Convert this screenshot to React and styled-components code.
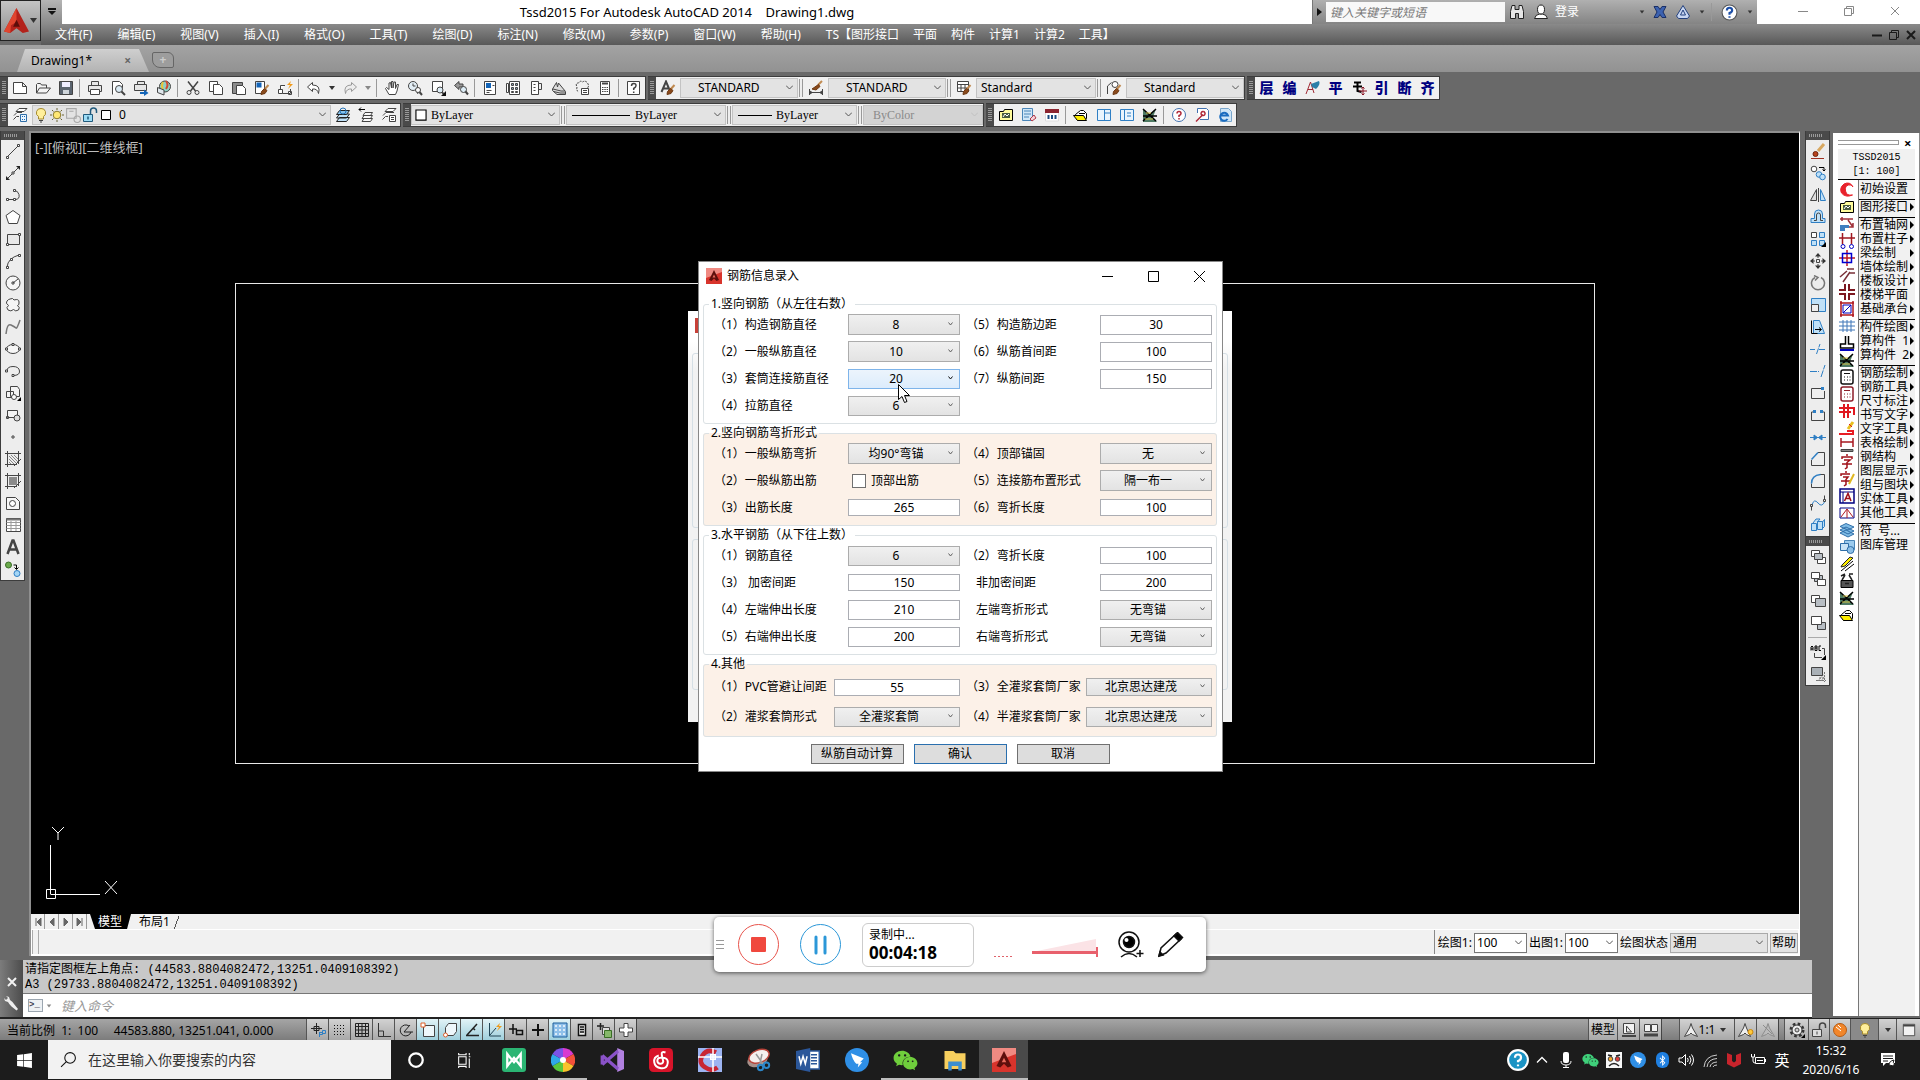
import React from 'react';
import styled, { createGlobalStyle, css } from 'styled-components';
import { FaWindows, FaWeixin, FaBluetoothB } from 'react-icons/fa';

const UI_FONT = '"Noto Sans", "Noto Sans CJK SC", sans-serif';
const MONO_FONT = '"Liberation Mono", "Noto Sans CJK SC", monospace';
const SERIF_FONT = '"Liberation Serif", "Noto Sans CJK SC", serif';

const GlobalStyle = createGlobalStyle`
  * {
    box-sizing: border-box;
  }

  body {
    margin: 0;
    font-family: ${UI_FONT};
    font-size: 12px;
    line-height: 16px;
    color: #000;
    background: #696969;
  }

  button,
  input,
  select {
    font: inherit;
    color: inherit;
    margin: 0;
    padding: 0;
    border: 0;
    border-radius: 0;
    background: none;
    outline: none;
  }

  svg {
    display: block;
    flex: none;
  }
`;

/* ---------- icons ---------- */

const BLUE = '#2f7fc4';
const SKY = '#bfe0f7';
const NAVY = '#000080';

const CadA = (
  <>
    <path d="M8 0 16 15l-4 1-4-3-4 3-4-1z" fill="#b3221b" stroke="none" />
    <path d="M8 0 8 9 4.500 11 4 16 0 15z" fill="#e0452f" stroke="none" />
    <path d="M8 7.500 10.200 12H5.800z" fill="#5c0d0a" stroke="none" />
  </>
);

const brush = (
  <>
    <path d="M14.500 5 10 10" stroke="#c08a50" strokeWidth="2" />
    <path d="M10.500 8.500 7.500 11.500l-.5 3 4-1 2-3z" stroke="#6e3a14" fill="#8a4a1c" />
  </>
);

const ICONS = {
  cadA: CadA,
  new: <path d="M1.500 2.500h9l4 4v7h-13zM10.500 2.500v4h4" fill="#fff" />,
  open: <path d="M1.500 13V4.500l1-1h3l1 1.500h5v3M1.500 13l3-5h11l-4 5z" fill="#f4f4f4" />,
  save: (
    <>
      <path d="M1.500 1.500h13v13h-13z" fill="#5b6570" />
      <path d="M4 2h8v5H4z" fill="#eef" stroke="none" />
      <path d="M5 10h6v4H5z" fill="#cfd5da" stroke="none" />
    </>
  ),
  print: (
    <>
      <path d="M4.500 5V1.500h7V5M1.500 5.500h13v6h-13z" fill="#e6e6e6" />
      <path d="M3.500 9.500h9v5h-9z" fill="#fff" />
    </>
  ),
  preview: (
    <>
      <path d="M2.500 14.500v-13h7l3 3V8" fill="#fff" />
      <circle cx="9" cy="9" r="3.500" fill="#dcecf6" />
      <path d="m11.500 11.500 3.500 3.500" strokeWidth="2" />
    </>
  ),
  publish: (
    <>
      <path d="M4.500 4V1.500h7V4M1.500 4.500h12v6h-12z" fill="#e6e6e6" />
      <path d="M7 12h4V9.500l4.500 3.500-4.500 3V14H7z" fill="#1465b8" stroke="none" />
    </>
  ),
  globe: (
    <>
      <circle cx="9" cy="6.500" r="5.500" fill="#8fd0c4" />
      <path d="M10 1q3 4 0 8" stroke="#d24a31" strokeWidth="2" />
      <path d="M7 2q-2 4 0 7" stroke="#e6c63a" strokeWidth="2" />
      <path d="M1.500 7.500 8 10v5l-6.500-2.500z" fill="#dfe7ec" />
    </>
  ),
  cut: (
    <>
      <path d="M3 1.500 10.500 11M13 1.500 5.500 11" strokeWidth="1.500" />
      <circle cx="4" cy="12.500" r="2" />
      <circle cx="12" cy="12.500" r="2" />
    </>
  ),
  copy: (
    <>
      <path d="M1.500 1.500h8v10h-8z" fill="#fff" />
      <path d="M5.500 4.500h6l3 3v7h-9z" fill="#fff" />
    </>
  ),
  paste: (
    <>
      <path d="M1.500 2.500h10v11h-10z" fill="#8c8c8c" />
      <path d="M5.500 5.500h6l3 3v6h-9z" fill="#fff" />
    </>
  ),
  match: (
    <>
      <path d="M1.500 1.500h9v12h-9z" fill="#fff" />
      <path d="M2.500 2.500h5v5h-5z" fill="#1465b8" stroke="none" />
      {brush}
    </>
  ),
  blockEdit: (
    <>
      <path d="M8 5.500H3.500v4M1.500 9.500h4v4h-4zM5.500 13.500h8M13.500 9v4M11.500 11.500h3v3h-3z" fill="#fff" />
      <path d="m14 1-4 4h3l-2 4 5-5h-3z" fill="#f09a1a" stroke="none" />
    </>
  ),
  undo: <path d="M6.500 2.500 1.500 7l5 4.500V9q5-.5 6 4.500Q15 5 6.500 5z" fill="#fff" />,
  redo: <path d="m9.500 2.500 5 4.500-5 4.500V9q-5-.5-6 4.500Q1 5 9.500 5z" stroke="#9a9a9a" fill="#eee" />,
  down: <path d="M5 6h6l-3 4z" fill="#333" stroke="none" />,
  downDim: <path d="M5 6h6l-3 4z" fill="#888" stroke="none" />,
  pan: <path d="M5 14.500 1.500 8.500l1-1L5 9.500V3l1.500-.5L7.500 8V1.500H9V8l1-6h1.500v6.500l1.500-4h1.500L13 11l-1.500 3.500z" fill="#fff" />,
  zoomRt: (
    <>
      <circle cx="6" cy="6" r="4.500" fill="#e2eef6" />
      <path d="M6 3.500V6h2.500M11 14l-2-4" />
      <circle cx="11" cy="10" r="2.500" fill="#fff" />
      <path d="m12.500 12 2.500 3" strokeWidth="2" />
    </>
  ),
  zoomWin: (
    <>
      <path d="M2.500 1.500h10v10h-10z" fill="#fff" />
      <circle cx="10" cy="10" r="3" fill="#dcecf6" />
      <path d="m12 12 1.500 2" strokeWidth="2" />
      <path d="M16 11v5h-5z" fill="#111" stroke="none" />
    </>
  ),
  zoomPrev: (
    <>
      <path d="M6 1.500 1.500 5.500 6 9.500V7h4V4H6z" fill="#999" />
      <circle cx="10.500" cy="9.500" r="3" fill="#dcecf6" />
      <path d="m12.500 11.500 2.500 3" strokeWidth="2" />
    </>
  ),
  props: (
    <>
      <path d="M2.500 1.500h11v13h-11z" fill="#fff" />
      <path d="M4 3h5v5H4z" fill="#1465b8" stroke="none" />
      <path d="M10.500 5.500h2M4.500 10.500h5M4.500 12.500h3" />
    </>
  ),
  design: (
    <>
      <path d="M1.500 3.500h2v9h-2zM4.500 1.500h10v13h-10z" fill="#fff" />
      <path d="M6.500 3.500h2v2h-2zM10.500 3.500h2v2h-2zM6.500 7.500h2v2h-2zM10.500 7.500h2v2h-2zM6.500 11.500h2v1h-2zM10.500 11.500h2v1h-2z" fill="#8aa0b4" />
    </>
  ),
  palettes: (
    <>
      <path d="M3.500 1.500h7v13h-7z" fill="#fff" />
      <path d="M5.500 4.500h2M5.500 7.500h2M5.500 10.500h2M10.500 3.500h3v6h-3" />
    </>
  ),
  sheets: <path d="m1.500 9 4-6.500 1 4.500 1-4 7 8.500v3H6l-4.500-4zM2 9l8 2h4M2.500 11.500 9 13h5" fill="#ddd" />,
  markup: (
    <>
      <path d="M2.500 6q-1-3 2-3 2-3 4-1 3-2 5 1 2 3 0 5M3 7q-1 4 2 5" strokeDasharray="2 1" />
      <path d="M7.500 8.500h7v6h-7zM9 10.500h4M9 12.500h4" fill="#fff" />
    </>
  ),
  calc: (
    <>
      <path d="M3.500 1.500h9v13h-9z" fill="#fff" />
      <path d="M5 3.500h6" strokeWidth="2" />
      <path d="M5 7.500h6M5 9.500h6M5 11.500h6" strokeDasharray="1.500 .8" />
    </>
  ),
  help: (
    <>
      <path d="M1.500 1.500h12v13h-12z" fill="#fff" />
      <path d="M5.500 6q0-2.500 2.300-2.500T10 5.800Q10 7 7.700 8.500V10M7.700 11.500v1.500" strokeWidth="1.500" />
    </>
  ),
  textStyle: (
    <>
      <path d="M1.500 12 6 1.500 10 11M3 8.500h5" strokeWidth="2" />
      {brush}
    </>
  ),
  dimStyle: (
    <>
      <path d="M1.500 9v6M14.500 9v6M2 12.500h12M1 12.500l2-1.500v3zM15 12.500 13 11v3z" />
      <path d="m14 1-4 4" stroke="#c08a50" strokeWidth="2" />
      <path d="M10.500 4.500 4 9l4 1 4-3.500z" stroke="#6e3a14" fill="#8a4a1c" />
    </>
  ),
  tableStyle: (
    <>
      <path d="M1.500 1.500h11v10h-11zM1.500 4.500h11M1.500 8h11M5 4v7M9 4v7" fill="#fff" />
      {brush}
    </>
  ),
  leaderStyle: (
    <>
      <path d="M1.500 14V6l4-3.500" />
      <circle cx="9" cy="4.500" r="3" fill="#fff" />
      {brush}
    </>
  ),
  layers: (
    <>
      <path d="m4 4.500 3-3h8l-3 3zM2 8.500l3-3h5M1.500 12.500l3-3H7" fill="#fff" />
      <path d="M8.500 7.500h6v7h-6z" fill="#eaf4fc" stroke="#2f6ea8" />
      <path d="M10 9.500h3M10 12.500h3" stroke="#1465b8" strokeDasharray="1 1" />
    </>
  ),
  layerCur: (
    <>
      <path d="m1.500 14.500 3-4h10l-3 4zM1.500 11l3-4h10l-3 4z" fill={SKY} stroke="#222" />
      <path d="m1.500 7.500 3-4h10l-3 4z" fill="#86c1ea" stroke="#222" />
      <circle cx="8" cy="4" r="3" stroke="#2674b8" />
    </>
  ),
  layerPrev: (
    <>
      <path d="m4 14.500 2-3h8.500l-2 3zM4 11.500l2-3h8.500l-2 3zM5 8.500l2-3h7.500l-2 3z" fill="#f8f8f8" />
      <path d="M1 2.500h6M3 .5l-2 2 2 2" stroke="#000" />
    </>
  ),
  layerState: (
    <>
      <path d="m4 4.500 3-3h8l-3 3zM2 8.500l3-3h8M1.500 12.500l3-3H7" fill="#fff" />
      <path d="M8.500 8.500h6v6h-6zM10 10.500h3M10 12.500h3" fill="#fff" />
    </>
  ),
  bulb: (
    <>
      <path d="M8 1.500a4.300 4.300 0 0 0-2.500 8V12h5V9.500A4.300 4.300 0 0 0 8 1.500z" fill="#ffef9a" stroke="#a58a2c" />
      <path d="M6 13.500h4M7 15h2" />
    </>
  ),
  sun: (
    <>
      <circle cx="8" cy="8" r="3.800" fill="#ffe773" stroke="#8b7a2d" />
      <path d="M8 1v2M8 13v2M1 8h2M13 8h2M3 3l1.500 1.500M11.500 11.500 13 13M13 3l-1.500 1.500M4.500 11.500 3 13" stroke="#6b6432" />
    </>
  ),
  freeze: (
    <>
      <path d="M1.500 1.500h9v9h-9zM4 4h4" stroke="#a8a8a8" />
      <circle cx="11.500" cy="11.500" r="3" stroke="#a8a8a8" />
    </>
  ),
  lock: (
    <>
      <path d="M1.500 7.500h9v7h-9z" fill="#9edcf5" stroke="#215a7c" />
      <path d="M8.500 8V4a3 3 0 0 1 6 0v2M6 9.500v3" stroke="#215a7c" strokeWidth="1.500" />
    </>
  ),
  unlock: (
    <>
      <path d="M1.500 7.500h9v7h-9zM6 9.500v3" fill="#ddd" />
      <path d="M8.500 8V4a3 3 0 0 1 6 0v2" strokeWidth="1.500" />
    </>
  ),
  swatch: <path d="M3.500 3.500h9v9h-9z" fill="#fff" stroke="#000" />,
  folderImg: (
    <>
      <path d="M1.500 4.500h4l1-2h8v11h-13z" fill="#fffb9c" stroke="#000" />
      <path d="M4 6h8v5H4z" fill="#4a5b40" stroke="none" />
      <path d="m5 10 2-3 2 2 2-2" stroke="#fff" />
    </>
  ),
  gridPen: (
    <>
      <path d="M1.500 1.500h10v12h-10z" fill="#cfe6f7" stroke="#4a86b8" />
      <path d="M3 4h7M3 7h7M3 10h5" stroke="#4a86b8" />
      <path d="m9 12 4-4 2 3-4 3z" fill="#f6d4da" stroke="#b03a4a" />
    </>
  ),
  tableRed: (
    <>
      <path d="M1.500 5v9h13V5" stroke="#ddd" fill="#fff" />
      <path d="M1 2h14v4H1z" fill="#8c2530" stroke="none" />
      <path d="M4.500 8v4M8 8v4M11.500 8v4" stroke="#1a4b80" strokeWidth="2" />
    </>
  ),
  yellowOpen: (
    <>
      <path d="m2.500 7.500 5-4h3l3 3v5l-2 2h-7z" fill="#fff" stroke="#000" />
      <path d="M.5 8.500h10l3 5h-9z" fill="#ffee00" stroke="#000" />
      <path d="M6 6.500h6" stroke="#000" />
    </>
  ),
  winA: <path d="M1.500 2.500h13v11h-13zM8.500 2.500v11M8.500 6h6" fill="#e8f4fd" stroke={BLUE} />,
  winB: <path d="M1.500 2.500h13v11h-13zM5.500 2.500v11M8 6h4M8 9h4" fill="#e8f4fd" stroke={BLUE} />,
  sketch: (
    <>
      <path d="M1 15V2l6 6 7-6-3 8 4 5z" fill="#4e7a63" stroke="none" />
      <path d="M1 2l13 12M1 14 14 2M1 9h14" stroke="#000" strokeWidth="1.500" />
      <path d="M3 12h8M4 6h5" stroke="#d8c84a" />
    </>
  ),
  helpRed: (
    <>
      <circle cx="8" cy="8" r="6.500" fill="#fff" stroke="#4272b0" />
      <path d="M6 6.500q0-2 2-2t2 2Q10 8 8 8.500V10M8 11v1.500" stroke="#b02a3a" strokeWidth="1.500" />
    </>
  ),
  docPen: (
    <>
      <path d="M3.500 6V1.500h9l2 2v9H6" fill="#fff" stroke="#4272b0" />
      <path d="M2 14.500 9 7.500M9 4.500a2 2 0 1 0 .1 0" stroke="#b02a3a" strokeWidth="1.500" />
    </>
  ),
  ie: (
    <>
      <path d="M3.500 1.500h8l3 3v10h-11z" fill="#cfe6f7" stroke="#7aa6cc" />
      <path d="M10.500 12A4 4 0 1 1 11 8.500H4" stroke="#1a6cc0" strokeWidth="2" />
    </>
  ),
  brushA: (
    <>
      <path d="M1 14 5.500 2 9 13M3 9.500h5" stroke="#a02a34" />
      <path d="M6 4 14 1q2 3-3 8L7 7z" fill="#2b7fa8" stroke="none" />
    </>
  ),
  target: (
    <>
      <path d="M3 2.500h7M2 6.500h9M6.500 2v9l4 1" stroke="#000" strokeWidth="2" />
      <path d="M12 7v8M8 11h8M10.500 8.500 12 7l1.500 1.500M10.500 13.500 12 15l1.500-1.500" stroke="#8a1020" />
    </>
  ),
  /* draw */
  line: <path d="m3 13 10-10M1.500 13.500h2v2h-2zM12.500 1.500h2v2h-2z" fill="#fff" />,
  xline: (
    <>
      <path d="m2 14 12-12" />
      <path d="M1 15v-4l4 4zM15 1v4l-4-4z" fill="#222" stroke="none" />
      <path d="M7 7h2v2H7z" fill="#fff" />
    </>
  ),
  pline: (
    <>
      <path d="M2 12.500h8q5 0 4-5-1-4-5-4" />
      <path d="M1.500 11.500h2v2h-2zM8.500 11.500h2v2h-2zM8.500 2.500h2v2h-2z" fill="#fff" />
    </>
  ),
  polygon: <path d="m8 1.500 7 5-2.700 8H3.700L1 6.500z" fill="#fff" />,
  rect: (
    <>
      <path d="M2.500 3.500h12v10h-12z" fill="#e8e8e8" />
      <path d="M1.500 12.500h2v2h-2zM13.500 2.500h2v2h-2z" fill="#fff" />
    </>
  ),
  arc: (
    <>
      <path d="M2 14Q3 5 14 2" />
      <path d="M1.500 13.500h2v2h-2zM13.500 1.500h2v2h-2zM5.500 5.500h2v2h-2z" fill="#fff" />
    </>
  ),
  circle: (
    <>
      <circle cx="8" cy="8" r="7" fill="#f6f6f6" />
      <path d="m8 8 5-4M7 7h2v2H7z" fill="#fff" />
    </>
  ),
  cloud: <path d="M5 2q3-1.500 4 1 5-1.500 5 2 .5 3-1.500 3.500 3 2 1 4.500-3 2-5-.5Q6 15 3 13q-2.500-2.500.5-4.500Q0 6 2 4q1-1.500 3-2z" fill="#f6f6f6" />,
  spline: <path d="M1 15q1-11 5-9t5 3 4-8" strokeWidth="1.500" stroke="#777" />,
  ellipse: (
    <>
      <ellipse cx="8" cy="8" rx="6.500" ry="4.500" fill="#f6f6f6" />
      <path d="M.5 7h2v2h-2zM13.500 7h2v2h-2zM7 2.500h2v2H7z" fill="#fff" />
    </>
  ),
  ellipseArc: (
    <>
      <path d="M2 8q0-4.500 6-4.500T14.500 8 8 12.500" />
      <path d="M.5 7h2v2h-2zM7 11.500h2v2H7z" fill="#fff" />
    </>
  ),
  insert: (
    <>
      <path d="M5.500 1.500h7l2 3v7h-9zM1.500 6.500h7v6h-7z" fill="#f4f4f4" />
      <circle cx="9" cy="12" r="2.500" fill="#fff" />
      <path d="M16 12v4h-4z" fill="#000" stroke="none" />
    </>
  ),
  block: (
    <>
      <path d="M2.500 3.500h10v7h-10zM1.500 9.500h2v2h-2z" fill="#f4f4f4" />
      <circle cx="12" cy="11" r="3" fill="#ddd" />
    </>
  ),
  point: <path d="M7 7h2v2H7z" fill="#fff" />,
  hatch: (
    <>
      <path d="m4 8 5 5M4 5l8 8M6 4l7 7M9 4l4 4M4 11l2 2" stroke="#888" />
      <path d="M2.500 0v16M13.500 0v13M0 2.500h16M0 13.500h12M9 15l7-7" />
    </>
  ),
  gradient: (
    <>
      <path d="M4 4h8v8H4z" fill="#8a8a8a" stroke="none" />
      <path d="M2.500 0v16M13.500 0v13M0 2.500h16M0 13.500h12M9 15l7-7" />
    </>
  ),
  region: (
    <>
      <path d="M1.500 2.500h9l4 4v8h-13z" fill="#f6f6f6" />
      <circle cx="7.500" cy="8.500" r="3" fill="#fff" />
    </>
  ),
  table: (
    <>
      <path d="M1.500 1.500h14v13h-14z" fill="#fff" />
      <path d="M1.500 5.500h14M1.500 8.500h14M1.500 11.500h14M6 4v10M11 4v10" stroke="#999" />
      <path d="M1.500 2.500h14" stroke="#777" strokeWidth="2" />
    </>
  ),
  mtext: <path d="M2.500 15 7.500 1.500h1l5 13.500M4.500 10.500h7" strokeWidth="2.500" />,
  addSel: (
    <>
      <circle cx="3.500" cy="4" r="3" fill="#6bab4c" stroke="#3a6e26" />
      <circle cx="12" cy="12.500" r="3" fill="#a4d5f5" stroke={BLUE} />
      <path d="M8.500 4h3v4M9.500 6.500l2 2 2-2" stroke="#000" />
    </>
  ),
  /* modify */
  erase: (
    <>
      <path d="M14 1 8 8" stroke="#d8a860" strokeWidth="3" />
      <circle cx="5.500" cy="11" r="2.500" fill="#b8431c" stroke="#6e2710" />
      <path d="M1 15.500h13" stroke="#a03020" />
    </>
  ),
  copyObj: (
    <>
      <circle cx="4" cy="4" r="2.800" fill="#fff" />
      <circle cx="9" cy="9.500" r="2.800" fill={SKY} stroke={BLUE} />
      <circle cx="12.500" cy="12" r="2.800" fill={SKY} stroke={BLUE} />
      <path d="M9 2.500h5v3M12.500 4.500l1.500 1.500 1.500-1.500" stroke="#000" />
    </>
  ),
  mirror: (
    <>
      <path d="M6.500 2.500v11h-6zM8.500 1v14" fill="#ddd" />
      <path d="M10.500 2.500v11h5z" fill={SKY} stroke={BLUE} />
    </>
  ),
  offset: (
    <>
      <path d="M1 13.500V9.500h3.500V5a4 4 0 0 1 8 0v4.500H15v4z" fill={SKY} stroke={BLUE} />
      <path d="M4 11.500h2.500V6a2 2 0 0 1 4 0v5.500H13" />
    </>
  ),
  array: (
    <>
      <path d="M1.500 1.500h5v5h-5z" fill="#fff" />
      <path d="M9.500 1.500h5v5h-5zM1.500 9.500h5v5h-5zM9.500 9.500h5v5h-5z" fill={SKY} stroke={BLUE} />
      <path d="M16 11v5h-5z" fill="#000" stroke="none" />
    </>
  ),
  move: (
    <>
      <path d="M8 0l3 3.500H5zM8 16l3-3.500H5zM0 8l3.500-3v6zM16 8l-3.500-3v6z" fill="#333" stroke="none" />
      <path d="M8 3v2M8 11v2M3 8h2M11 8h2M6.500 6.500h3v3h-3z" />
    </>
  ),
  rotate: <path d="M5 2.500a6.500 6.500 0 1 0 6 0M4 .5l4 2-3 3" strokeWidth="1.500" stroke="#777" />,
  scale: (
    <>
      <path d="M1.500 1.500h14v13h-14z" fill={SKY} stroke={BLUE} />
      <path d="M1.500 7.500h7v7h-7z" fill="#eee" />
    </>
  ),
  stretch: (
    <>
      <path d="M3.500 1.500h6l5 13h-11z" fill={SKY} stroke={BLUE} />
      <path d="M1.500 1.500v13h6M5 10.500h6M9 8.500l2.500 2L9 12.500" stroke="#000" />
    </>
  ),
  trim: <path d="M0 8.500h5M9 8.500h7M6.500 13 10 3" stroke={BLUE} strokeDasharray="6 1" />,
  extend: <path d="M0 8.500h9M11 14l4-12" stroke={BLUE} strokeDasharray="7 1" />,
  breakAt: (
    <>
      <path d="M12 3.500H1.500v10h13V6" fill="#eee" />
      <path d="M11 2h3v3h-3z" fill={BLUE} stroke="none" />
    </>
  ),
  breakObj: (
    <>
      <path d="M3 5H1.500v8.500h13V5H13" fill="#eee" />
      <path d="M3 3h3v3H3zM10 3h3v3h-3z" fill={BLUE} stroke="none" />
    </>
  ),
  join: <path d="M0 8.500h16M4 6l3.500 2.500L4 11zM12 6 8.500 8.500 12 11z" stroke={BLUE} fill={BLUE} />,
  chamfer: (
    <>
      <path d="M8 1.500h6.500v13h-13V9" fill="#eee" />
      <path d="M1.500 8.500 8 1.500" stroke={BLUE} strokeWidth="1.500" />
    </>
  ),
  fillet: (
    <>
      <path d="M10 1.500h4.500v13h-13v-4" fill="#eee" />
      <path d="M1.500 10.500q0-8 9-9" stroke={BLUE} strokeWidth="1.500" />
    </>
  ),
  blend: (
    <>
      <path d="M2 10q2-7 6-2t7-2" stroke={BLUE} />
      <path d="M.5 9.500h2v2h-2zM13.500 4.500h2v2h-2zM1.500 15.500v-4M14.500 4.500v-4" />
    </>
  ),
  explode: <path d="M1.500 6.500h5v7h-5zM7.500 4.500h5v8h-5zM3 6l3-4h4L7.500 5M12.500 5l2-2.500v7l-2 2" fill={SKY} stroke={BLUE} />,
  order1: (
    <>
      <path d="M1.500 1.500h8v6h-8zM7.500 8.500h8v6h-8z" fill="#fff" />
      <path d="M4.500 4.500h8v6h-8z" fill="#b8bec4" />
    </>
  ),
  order2: (
    <>
      <path d="M4.500 4.500h8v6h-8z" fill="#b8bec4" />
      <path d="M1.500 1.500h8v6h-8zM7.500 8.500h8v6h-8z" fill="#fff" />
    </>
  ),
  order3: (
    <>
      <path d="M1.500 2.500h8v7h-8z" fill="#fff" />
      <path d="M5.500 5.500h10v8h-10z" fill="#b8bec4" />
    </>
  ),
  order4: (
    <>
      <path d="M7.500 7.500h8v7h-8z" fill="#b8bec4" />
      <path d="M1.500 1.500h10v8h-10z" fill="#fff" />
    </>
  ),
  annoFront: (
    <>
      <path d="M4.500 9v4.500H12M12 4.500h2.500V11" />
      <path d="M1 6.500V3l1-1 1 1v3.500M1 5h2M5 2v4.500h2V2zM5 4h2M11 2H9v4.500h2" stroke="#000" />
      <path d="M16 11v5h-5z" fill="#000" stroke="none" />
    </>
  ),
  hatchBack: (
    <>
      <path d="M6 14.500h10M14.500 6v10M9 12l6 0M8 15l6-7M11 15l4-5" stroke="#777" strokeDasharray="2 1" />
      <path d="M1.500 1.500h11v8h-11z" fill="#a9b0b6" />
    </>
  ),
  /* TSSD panel */
  swirl: <path d="M14 5Q11-1 5 2 0 6 2.500 11q4 5 11 2-6 1-7-4-1-5 3-6 3-1 4.500 2z" fill="#e8222c" stroke="#e8222c" />,
  axis: (
    <>
      <path d="M1 3h13M3 1v4M9 4l5 7M14 7v4h-4" stroke="#a03038" strokeWidth="1.500" />
      <path d="M1 9h9v3H6v3H1z" fill="#3f7fc0" stroke="none" />
    </>
  ),
  axisNet: (
    <>
      <path d="M0 5h16M3.500 0v11M12.500 0v11" stroke="#a01820" strokeWidth="1.500" />
      <path d="M6 13.500a2 2 0 1 0-4 0 2 2 0 1 0 4 0zM14.500 13.500a2 2 0 1 0-4 0 2 2 0 1 0 4 0z" stroke="#0000c0" />
    </>
  ),
  column: (
    <>
      <path d="M0 8h16M8 0v16" stroke="#c01820" strokeWidth="1.500" />
      <path d="M3.500 3.500h9v9h-9z" stroke="#0000d0" strokeWidth="1.500" />
    </>
  ),
  beam: <path d="m1 10 7-6M4 15l7-10M8 2l7 0M10 6h6" stroke="#7a3038" strokeWidth="1.500" />,
  wall: <path d="M6 0v6H0M10 0v6h6M6 16v-6H0M10 16v-6h6" stroke="#7c1820" strokeWidth="2" />,
  slab: (
    <>
      <path d="M1 2h14M1 14h14M2 0v16M14 0v16" stroke="#b01820" strokeWidth="1.500" />
      <path d="M4 4h8v8H4zM4 12l8-8" stroke="#0000c0" />
    </>
  ),
  stair: <path d="M0 4h16M0 8h16M0 12h16M4 2v12M8 2v12M12 2v12" stroke="#3f77b8" />,
  base: (
    <>
      <path d="M6.500 1v8h-5v4h13V9h-5V1" stroke="#000" strokeWidth="1.500" />
      <path d="M1 15h14" stroke="#0000c0" strokeWidth="2" />
    </>
  ),
  calcBlack: (
    <>
      <rect x="2" y="1" width="12" height="14" rx="2" fill="#fff" stroke="#111" strokeWidth="1.500" />
      <path d="M5 4.500h6M5 8h1M8 8h1M10.500 8h1M5 11h1M8 11h1M10.500 11h1" stroke="#111" />
    </>
  ),
  calcRed: (
    <>
      <rect x="2" y="1" width="12" height="14" rx="2" fill="#fff" stroke="#8c1d28" strokeWidth="1.500" />
      <path d="M5 4.500h6M5 8h1M8 8h1M10.500 8h1M5 11h1M8 11h1M10.500 11h1" stroke="#8c1d28" />
    </>
  ),
  rebar: <path d="M0 5h15v7M0 9h12M5 1v14M9 1v14" stroke="#e01820" strokeWidth="2" />,
  rebarPen: (
    <>
      <path d="M0 14h14v-3H8" stroke="#e81c24" strokeWidth="2" />
      <path d="m9 9 5-7" stroke="#e8c020" strokeWidth="3" />
      <path d="m10 4 3 3" stroke="#e01820" />
    </>
  ),
  dim: (
    <>
      <path d="M2 1v9M14 1v9M2 5h12" stroke="#a81820" strokeWidth="1.500" />
      <path d="M2 12.500h12v2H2z" fill="#888" />
    </>
  ),
  word: <path d="M8 0v2M3 5V3h10v2M5 6h6L8 8.500v5L6 15M3 10h10" stroke="#a01018" strokeWidth="1.500" />,
  wordPen: (
    <>
      <path d="M7 0v2M2 5V3h9M4 6h5L7 8.500v5L5 15M2 10h9" stroke="#a01018" strokeWidth="1.500" />
      <path d="m10 13 5-10" stroke="#e0b820" strokeWidth="2" />
    </>
  ),
  tableA: (
    <>
      <path d="M1 1h14v14H1z" fill="#fff" stroke={NAVY} strokeWidth="1.500" />
      <path d="M1 4h14M4 4v11" stroke={NAVY} />
      <path d="M5.500 13 9 5.500l3 7.500M7 10.500h4" stroke="#a01018" strokeWidth="1.500" />
    </>
  ),
  steel: (
    <>
      <path d="M1 3h14v10H1z" stroke={NAVY} fill="#fff" />
      <path d="m2 12 6-8 6 8M8 4v9" stroke="#b01820" />
    </>
  ),
  stack: <path d="m1 11 6-3 8 4-6 3zM1 8l6-3 8 4-6 3zM1 4.500 7 1.500l8 3.500-6 3z" fill="#7fbce6" stroke="#2f6ea8" />,
  group: (
    <>
      <path d="M5.500 1.500h10v9h-10z" fill="#9ccbee" stroke="#4a86b8" />
      <path d="M1.500 4.500h8v7h-8z" fill="#c9e3f6" stroke="#2f6ea8" />
      <circle cx="11.500" cy="11" r="3.500" fill="#8cbfe6" stroke="#2f6ea8" />
    </>
  ),
  pencil2: (
    <>
      <path d="M3 9 11 1l3 1-8 8-4 1z" fill="#ffee00" stroke="#222" />
      <path d="m2 15 12-10M6 15 15 8" stroke="#000" />
    </>
  ),
  toolbox: (
    <>
      <path d="M2 7.500h12v7H2z" fill="#555" stroke="#000" />
      <path d="M3 7 6 2M13 7l-3-5M2 3l4-2M10 1h4M6 10.500h4" stroke="#222" strokeWidth="1.500" />
    </>
  ),
  /* status */
  infer: (
    <>
      <path d="M6.500 1v11M1 6.500h11M4 4.500h5v4H4z" stroke="#222" />
      <path d="M9.500 10v5M9.500 10.500h3v2h-3M12.500 8.500h3v3h-3z" stroke={BLUE} />
    </>
  ),
  snapDots: <path d="M2 3.500h12M2 6.500h12M2 9.500h12M2 12.500h12" strokeDasharray="1 2" stroke="#111" />,
  grid: <path d="M1.500 1.500h13v13h-13zM4.500 1v14M8 1v14M11.500 1v14M1 4.500h14M1 8h14M1 11.500h14" stroke="#222" />,
  ortho: <path d="M2.500 1v13.500H15M2.500 9h5v5" stroke="#333" />,
  polar: <path d="M11 4a5.500 5.500 0 1 0 2 6M6 10h9M6 10l6-7" stroke="#222" />,
  osnap: (
    <>
      <path d="M3.500 3.500h11v11h-11z" fill="#eef7fb" />
      <path d="M1 1h4v4H1z" stroke="#e0602a" fill="#fff" />
    </>
  ),
  osnap3: (
    <>
      <path d="m3.500 5.500 3-4h8v8l-3 4h-8z" fill="#eef7fb" />
      <circle cx="3.500" cy="13" r="2" stroke="#e0602a" fill="#fff" />
    </>
  ),
  otrack: <path d="M2 13.500h13M3 13 13 2M9 6l2 2" stroke="#222" strokeWidth="1.500" />,
  ducs: (
    <>
      <path d="M3.500 1v13H15M4 13l6-7" stroke="#245" />
      <path d="m14 1-4 4h3l-2 4 5-5h-3z" fill="#f09a1a" stroke="none" />
    </>
  ),
  dyn: <path d="M5 2v10M1 7h8M8.500 8.500h6v4h-6z" stroke="#111" strokeWidth="1.500" />,
  lwt: <path d="M8 2v12M2 8h12" stroke="#111" strokeWidth="2" />,
  tpy: (
    <>
      <path d="M1 1h14v14H1z" fill="#8fc0ea" stroke="#1c5e9c" />
      <path d="M3 4h10M3 8h10M3 12h10" stroke="#dcebf8" strokeDasharray="2 2" strokeWidth="2" />
    </>
  ),
  qp: <path d="M4.500 2.500h7v11h-7zM6 5h4M6 7.500h4M6 10h4" stroke="#111" strokeWidth="1.500" fill="#eee" />,
  sc: (
    <>
      <path d="M1 4h7M4.500 1v7" stroke="#222" strokeWidth="1.500" />
      <path d="M6.500 5.500h7v7h-7z" fill="#ddd" />
      <path d="M8.500 8.500h7v7h-7z" fill="#86b86a" stroke="#3a6e26" />
    </>
  ),
  am: <path d="M6 1.500h4V6h4.500v4H10v4.500H6V10H1.500V6H6z" fill="#fff" />,
  paper: (
    <>
      <path d="M2.500 1.500h11v10h-11zM5.500 10V4l5 6z" fill="#f2f2f2" />
      <path d="M1 14h14" strokeWidth="2" />
    </>
  ),
  views: (
    <>
      <path d="M1.500 2.500h6v7h-6zM8.500 2.500h6v7h-6z" fill="#f2f2f2" />
      <path d="M1 13h14" strokeWidth="3" />
    </>
  ),
  anno: <path d="M8 1.500 9.500 6l5 8.500-5-2L8 11l-1.500 1.500-5 2 5-8.500z" fill="#eee" />,
  annoSun: (
    <>
      <path d="M7 1.500 8.500 6l4 8.500-4-2L7 11l-1.500 1.500-5 2 5-8.500z" fill="#eee" />
      <circle cx="12.500" cy="10" r="2.500" fill="#ffc93c" stroke="#c8860d" />
    </>
  ),
  annoDim: <path d="M8 1.500 9.500 6l5 8.500-5-2L8 11l-1.500 1.500-5 2 5-8.500zM3 3l9 9" stroke="#8d8d8d" fill="#bbb" />,
  gear: (
    <>
      <circle cx="8" cy="8" r="6" stroke="#333" strokeWidth="3" strokeDasharray="2.500 2.200" />
      <circle cx="8" cy="8" r="5" fill="#eee" stroke="#333" />
      <circle cx="8" cy="8" r="2" fill="#ccc" />
      <path d="M16 12v4h-4z" fill="#000" stroke="none" />
    </>
  ),
  orange: (
    <>
      <circle cx="8" cy="8" r="6.500" fill="#f2862a" stroke="#b65c14" />
      <path d="m4 5 5 4M6 3l3 3" stroke="#fff" />
    </>
  ),
  winFrame: (
    <>
      <path d="M1.500 1.500h13v13h-13z" fill="#f2f2f2" />
      <path d="M1.500 3h13" strokeWidth="2" />
    </>
  ),
  /* info center */
  binoc: <path d="M1.500 14.500v-7l1.500-6h3v4h4v-4h3l1.500 6v7h-5v-5h-3v5z" fill="#e6e6e6" stroke="#222" />,
  person: (
    <>
      <path d="M1.500 14.500q1-4 5-4.500h3q4 .5 5 4.500z" fill="#fff" stroke="#222" />
      <ellipse cx="8" cy="5.500" rx="3.500" ry="4.500" fill="#fff" stroke="#222" />
    </>
  ),
  exch: <path d="M2 2.500h4l2 3 2-3h4l-3 5.500 3 5.500h-4l-2-3-2 3H2L5 8z" fill="#3c62b0" stroke="#1a2f66" />,
  a360: <path d="M8 1.500 14.500 12l-2 2.500h-9L1.500 12zM8 6l2.500 5h-5z" fill="#c9d7f2" stroke="#22407e" />,
  helpBall: (
    <>
      <circle cx="8" cy="8" r="7" fill="#fff" stroke="#555" />
      <path d="M5.500 6q0-2.500 2.500-2.500T10.500 6Q10.500 7.500 8 8.500V10M8 11.500V13" stroke="#1d4fa8" strokeWidth="2" />
    </>
  ),
  /* taskbar */
  cortana: <circle cx="8" cy="8" r="4.500" stroke="#fff" strokeWidth="1.500" />,
  taskview: <path d="M2.500 4.500h7v7h-7zM2.500 1v1.500h7V1M2.500 15v-1.500h7V15M12.500 1v2M12.500 6v9M12 4.500h1.500" stroke="#fff" />,
  greenM: (
    <>
      <rect x="0" y="0" width="16" height="16" rx="2" fill="#2bb573" stroke="none" />
      <path d="M3.500 12V4l4.500 5.500L12.500 4v8L8 6.500z" stroke="#fff" strokeWidth="1.500" />
    </>
  ),
  wheel: (
    <>
      <path d="M8 8V0a8 8 0 0 1 7 4z" fill="#d93ad0" stroke="none" />
      <path d="M8 8l7-4a8 8 0 0 1 0 8z" fill="#f2503a" stroke="none" />
      <path d="M8 8l7 4a8 8 0 0 1-7 4z" fill="#f9c22b" stroke="none" />
      <path d="M8 8v8a8 8 0 0 1-7-4z" fill="#5ac83c" stroke="none" />
      <path d="M8 8 1 12a8 8 0 0 1 0-8z" fill="#2fa8e8" stroke="none" />
      <path d="M8 8 1 4a8 8 0 0 1 7-4z" fill="#7a52e8" stroke="none" />
      <circle cx="8" cy="8" r="2" fill="#fff" stroke="none" />
    </>
  ),
  vs: (
    <>
      <path d="M11.500 0 16 2v12l-4.500 2z" fill="#b180e0" stroke="none" />
      <path d="M1.500 5 12 14M1.500 11 12 2M1.500 5v6" stroke="#8a52c8" strokeWidth="2.200" />
    </>
  ),
  netease: (
    <>
      <rect x="0" y="0" width="16" height="16" rx="3" fill="#d8142a" stroke="none" />
      <path d="M11 3q-3-1-2.500 1.500L9.500 9a2 2 0 1 1-2-2.500Q13 6 12.500 10T8 13.500 3.500 9.500 6.500 5" stroke="#fff" strokeWidth="1.300" />
    </>
  ),
  tssdApp: (
    <>
      <path d="M0 0h16v16H0z" fill="#9db4f2" stroke="none" />
      <path d="M12 3Q6 0 3 5t2 8q4 3 8 0" stroke="#c82634" strokeWidth="3" />
      <path d="M0 6h16M10 0v16" stroke="#fff" />
      <path d="M8.500 4.500h3v3h-3z" stroke="#fff" />
    </>
  ),
  snip: (
    <>
      <ellipse cx="7" cy="8" rx="7" ry="4.500" fill="#a8908a" stroke="none" transform="rotate(-20 7 8)" />
      <ellipse cx="8" cy="5.500" rx="7" ry="4.200" fill="#f5f0ee" stroke="#b8443a" transform="rotate(-20 8 5.500)" />
      <path d="m6 4 5 7M10 4 8.500 11" stroke="#999" />
      <circle cx="9" cy="13" r="1.800" stroke="#2c86c8" strokeWidth="1.300" />
      <circle cx="13" cy="11.500" r="1.800" stroke="#2c86c8" strokeWidth="1.300" />
    </>
  ),
  wordApp: (
    <>
      <path d="M8 2h7.500v12H8z" fill="#fff" stroke="#2b579a" />
      <path d="M10 4.500h4M10 6.500h4M10 8.500h4M10 10.500h4" stroke="#2b579a" />
      <path d="M0 2 9.500 0v16L0 14z" fill="#2b579a" stroke="none" />
      <path d="m2 5.500 1.200 5 1.500-5 1.500 5 1.200-5" stroke="#fff" />
    </>
  ),
  ding: (
    <>
      <circle cx="8" cy="8" r="8" fill="#2f8fe6" stroke="none" />
      <path d="M4 3.500 12.500 7 10 9.500h1.500L8.500 13 9 10.500H7.500Q5 8 4 3.500z" fill="#fff" stroke="none" />
    </>
  ),
  folder: (
    <>
      <path d="M1 2h6l1.500 1.500H15V14H1z" fill="#f7cf5e" stroke="none" />
      <path d="M3.500 9h9v6h-2.300v-3H5.800v3H3.500z" fill="#3c8ed0" stroke="none" />
    </>
  ),
  cadApp: (
    <>
      <path d="M0 0h16v16H0z" fill="#f08a82" stroke="none" />
      <path d="M0 10 16 4v12H0z" fill="#d8342c" stroke="none" />
      <path d="m8 2 5 10-2.500 1L8 10.500 5.500 13 3 12z" fill="#5e0f0c" stroke="none" />
      <path d="m8 6.500 1.500 3h-3z" fill="#e86a5c" stroke="none" />
    </>
  ),
  tip: (
    <>
      <circle cx="8" cy="8" r="7.200" fill="#1b93c4" stroke="#fff" strokeWidth="1.500" />
      <path d="M5.800 6.300q0-2.300 2.200-2.300t2.200 2T8 8.700v1M8 11.200v1.400" stroke="#fff" strokeWidth="1.600" />
    </>
  ),
  up: <path d="m3 10.500 5-5 5 5" stroke="#fff" strokeWidth="1.300" />,
  mic: (
    <>
      <rect x="5" y="0" width="6" height="11" rx="2" fill="#fff" stroke="none" />
      <path d="M3 9q0 4 5 4t5-4M8 13v3M5 15.500h6" stroke="#fff" />
    </>
  ),
  face: (
    <>
      <path d="M0 0h16v16H0z" fill="#f7f7f7" stroke="none" />
      <circle cx="4.500" cy="7" r="2.300" fill="#f6a828" stroke="#444" />
      <circle cx="11.500" cy="7" r="2.300" fill="#e23c3c" stroke="#444" />
      <path d="m2 3 4 1M14 3l-4 1M3 14q5-5 10 0" stroke="#222" strokeWidth="1.500" />
    </>
  ),
  speaker: <path d="M1 6h3l3.500-3.500v11L4 10H1zM9.500 6q1.500 2 0 4M11.500 4q3 4 0 8M13.500 2.500q4 5.500 0 11" stroke="#fff" />,
  wifi: <path d="M2 15Q3 4 15 3M5 15q1-8 10-8.500M8 15q.5-4.500 7-5M11 15q.5-2 4-2" stroke="#ccc" />,
  shield: <path d="m1 1 5 2v6l2 1.500L10 9V3l5-2v11l-7 3.500L1 12z" fill="#c8242c" stroke="none" />,
  battery: <path d="M5.500 5.500h9v6h-9zM15.500 7v3M1.500 2v3h3V2M3 5v4q0 2 2 2M7 8.500h6" stroke="#fff" />,
  notify: (
    <>
      <path d="M1 1h14v10H6l-3 3v-3H1z" fill="#fff" stroke="none" />
      <path d="M3 4h10M3 6.500h10M3 9h5" stroke="#1c1c1c" />
      <path d="M9 13q0-4 5-5-2 3 1 4-2 3-6 1z" fill="#fff" stroke="#1c1c1c" />
    </>
  ),
  wrench: <path d="M2 1 5 2l1 3q3 2 4 4l4 5-1.500 1.500-5-4Q5 9 4 7L1 6 0 3l2 2 2-2z" fill="#eee" stroke="none" />,
  closeX: <path d="m4 4 8 8M12 4l-8 8" stroke="#f2f2f2" strokeWidth="2" />,
  search: (
    <>
      <circle cx="9.500" cy="6.500" r="5" stroke="#111" />
      <path d="m6 10-5 5" stroke="#111" />
    </>
  ),
};

const Icon = ({ name, size = 16, className }) => (
  <svg className={className} width={size} height={size} viewBox="0 0 16 16" fill="none" stroke="#444" strokeWidth="1" aria-hidden="true">
    {ICONS[name]}
  </svg>
);

/* ---------- page ---------- */

const Shell = styled.div`
  position: relative;
  display: flex;
  flex-direction: column;
  min-height: 100vh;
  background: #696969;
  overflow: hidden;
`;

const Header = styled.header`
  display: flex;
  height: 45px;
  background: #6b6b6b;
`;

const AppButton = styled.button`
  display: flex;
  align-items: center;
  justify-content: center;
  gap: 1px;
  width: 41px;
  height: 41px;
  border: 1px solid #222;
  background: linear-gradient(#c4c4c4, #8b8b8b);
`;

const HeaderRows = styled.div`
  flex: 1;
  display: flex;
  flex-direction: column;
`;

const TitleRow = styled.div`
  display: flex;
  height: 24px;
  background: #fff;
`;

const QuickButton = styled.button`
  width: 21px;
  background: linear-gradient(#b5b5b5, #8a8a8a);
  display: flex;
  align-items: center;
  justify-content: center;
`;

const Title = styled.h1`
  flex: 1;
  margin: 0;
  text-align: center;
  font-size: 13px;
  font-weight: 400;
  line-height: 24px;
  white-space: pre;
`;

const InfoCenter = styled.div`
  display: flex;
  align-items: center;
  width: 445px;
  background: linear-gradient(#b0b0b0, #848484);
  border-left: 1px solid #777;
`;

const InfoButton = styled.button`
  display: flex;
  align-items: center;
  justify-content: center;
  gap: 6px;
  width: ${({ $w }) => $w || 24}px;
  height: 22px;
  color: #fff;
`;

const InfoSearch = styled.input`
  width: 179px;
  height: 20px;
  padding: 0 4px;
  background: #f8f8f8;
  font-style: italic;

  &::placeholder {
    color: #777;
    opacity: 1;
  }
`;

const Spacer = styled.div`
  flex: 1;
`;

const WindowButtons = styled.div`
  display: flex;
  width: 163px;
  padding-right: 2px;
  justify-content: flex-end;
`;

const WindowButton = styled.button`
  display: flex;
  align-items: center;
  justify-content: center;
  width: ${({ $w }) => $w || 46}px;
  height: 22px;
`;

const MenuRow = styled.nav`
  display: flex;
  align-items: center;
  justify-content: space-between;
  height: 21px;
  padding: 0 1px 0 14px;
  background: linear-gradient(#8a8a8a, #585858);
`;

const MenuGroup = styled.div`
  display: flex;
  gap: ${({ $gap }) => $gap}px;
`;

const MenuItem = styled.a`
  color: #fff;
  text-decoration: none;
  white-space: nowrap;
`;

const FileTabs = styled.div`
  display: flex;
  align-items: flex-end;
  height: 27px;
  padding-left: 17px;
  background: linear-gradient(#a3a3a3, #929292);
`;

const FileTab = styled.div`
  display: flex;
  align-items: center;
  justify-content: space-between;
  width: 132px;
  height: 23px;
  padding: 0 18px 0 14px;
  background: linear-gradient(#cfcfcf, #b3b3b3);
  clip-path: polygon(8px 0, 122px 0, 132px 100%, 0 100%);
`;

const TabClose = styled.button`
  color: #666;
  font-weight: 700;
`;

const NewTab = styled.button`
  width: 22px;
  height: 16px;
  margin: 0 0 4px 3px;
  border: 1px solid #666;
  border-radius: 2px 6px 2px 8px;
  background: #9d9d9d;
  color: #ccc;
  line-height: 14px;
  font-weight: 700;
`;

const Toolbars = styled.div`
  display: flex;
  flex-direction: column;
  gap: 3px;
  padding: 4px 0;
  background: #696969;
`;

const ToolRow = styled.div`
  display: flex;
  gap: 2px;
`;

const Segment = styled.div`
  display: flex;
  align-items: center;
  height: 24px;
  border: 1px solid #3c3c3c;
  border-left: 0;
  background: #f0f0f0;
`;

const Grip = styled.div`
  width: 8px;
  align-self: stretch;
  border: 3px solid #4a4a4a;
  border-width: 4px 2px;
  background: repeating-linear-gradient(#9a9a9a 0 1px, #4a4a4a 1px 2px);
`;

const ToolButton = styled.button`
  display: flex;
  align-items: center;
  justify-content: center;
  flex: none;
  width: ${({ $w }) => $w || 23}px;
  height: ${({ $h }) => $h || 22}px;
`;

const GlyphButton = styled(ToolButton)`
  color: ${NAVY};
  font-size: 14px;
  font-weight: 900;
`;

const Sep = styled.div`
  width: 6px;
  height: 18px;
  background: linear-gradient(90deg, transparent 2px, #999 2px 3px, transparent 3px);
`;

const DoubleSep = styled(Sep)`
  background: linear-gradient(90deg, transparent 1px, #999 1px 2px, #eee 2px 4px, #999 4px 5px, transparent 5px);
`;

const ComboBox = styled.div`
  position: relative;
  display: flex;
  align-items: center;
  flex: none;
  width: ${({ $w }) => $w}px;
  height: 20px;
  border: 1px solid ${({ $edge }) => $edge || '#c3c3c3'};
  background: ${({ $bg }) => $bg || '#e3e3e3'};
`;

const ComboSelect = styled.select`
  flex: 1;
  min-width: 0;
  height: 100%;
  padding-left: ${({ $pad }) => $pad || 0}px;
  appearance: none;
  font-family: ${({ $serif }) => ($serif ? SERIF_FONT : 'inherit')};
  opacity: 1;
  color: ${({ disabled }) => (disabled ? '#8a8a8a' : '#000')};
`;

const Chevron = styled.svg`
  position: absolute;
  right: ${({ $right }) => $right || 4}px;
  top: calc(50% - 3px);
  pointer-events: none;
`;

const Combo = ({ label, value, w, pad, serif, disabled, bg, edge, children }) => (
  <ComboBox $w={w} $bg={bg} $edge={edge}>
    {children}
    <ComboSelect aria-label={label} defaultValue={value} $pad={pad} $serif={serif} disabled={disabled}>
      <option>{value}</option>
    </ComboSelect>
    <Chevron width="7" height="5" viewBox="0 0 7 5" fill="none" stroke={disabled ? '#c0c0c0' : '#555'}>
      <path d="M0 .5 3.500 4 7 .5" />
    </Chevron>
  </ComboBox>
);

const LineSample = styled.div`
  width: ${({ $w }) => $w}px;
  height: 1px;
  margin-left: 5px;
  background: #000;
`;

const Body = styled.div`
  flex: 1;
  display: flex;
`;

const MainColumn = styled.main`
  flex: 1;
  display: flex;
  flex-direction: column;
`;

const WorkRow = styled.div`
  flex: 1;
  display: flex;
  margin-bottom: 4px;
`;

const Rail = styled.div`
  width: ${({ $w }) => $w}px;
  padding-left: ${({ $pad }) => $pad || 0}px;
`;

const RailBar = styled.div`
  display: flex;
  flex-direction: column;
  align-items: center;
  width: 25px;
  border: 1px solid #3c3c3c;
  border-top: 0;
  background: #ededed;
`;

const RailGrip = styled.div`
  align-self: stretch;
  height: 9px;
  border: 3px solid #4a4a4a;
  border-right-width: 7px;
  background: repeating-linear-gradient(90deg, #9a9a9a 0 1px, #4a4a4a 1px 2px);
`;

const RailSep = styled.div`
  width: 19px;
  height: 1px;
  margin: 3px 0;
  background: #aaa;
`;

const CanvasColumn = styled.div`
  flex: 1;
  display: flex;
  flex-direction: column;
  border: 2px solid #8f8f8f;
  border-right: 1px solid #fff;
  border-bottom: 0;
`;

const Canvas = styled.section`
  position: relative;
  flex: 1;
  min-height: 680px;
  overflow: hidden;
  background: #000;
`;

const Drawing = styled.svg`
  position: absolute;
  inset: 0;
  width: 100%;
  height: 100%;
`;

const ViewLabel = styled.div`
  position: absolute;
  left: 4px;
  top: 6px;
  color: #bdbdbd;
  font-size: 13px;
`;

const Ucs = styled.svg`
  position: absolute;
  left: 12px;
  bottom: 11px;
`;

const Cursor = styled.svg`
  position: absolute;
  left: 867px;
  top: 251px;
`;

const BackWindow = styled.div`
  position: absolute;
  left: 657px;
  top: 178px;
  width: 544px;
  height: 411px;
  padding: 42px 4px 32px;
  display: flex;
  flex-direction: column;
  gap: 11px;
  background: linear-gradient(#fff 30px, #f2f2f2 60px);
`;

const BackGroup = styled.div`
  flex: ${({ $grow }) => $grow};
  border: 1px solid #d5dfe5;
  border-radius: 3px;
`;

const BackIcon = styled.div`
  position: absolute;
  left: 7px;
  top: 7px;
  width: 16px;
  height: 15px;
  background: #c84038;
`;

/* ---------- dialog ---------- */

const Dialog = styled.form`
  position: absolute;
  left: 667px;
  top: 128px;
  width: 525px;
  padding-bottom: 7px;
  border: 1px solid #888;
  background: #fff;
`;

const DialogTitle = styled.div`
  display: flex;
  align-items: center;
  height: 28px;
  padding-left: 7px;

  h2 {
    flex: 1;
    margin: 0 0 0 5px;
    font-size: 12px;
    font-weight: 400;
  }
`;

const DialogBody = styled.div`
  display: flex;
  flex-direction: column;
  gap: 2px;
  padding: 7px 5px 0 4px;
`;

const Group = styled.fieldset`
  min-width: 0;
  margin: 0;
  padding: ${({ $wide }) => ($wide ? '1px 4px 4px 10px' : '0 4px 4px 10px')};
  border: 1px solid #dbe1e4;
  border-radius: 3px;
  background: ${({ $tint }) => ($tint ? '#fcf1e8' : '#fff')};
`;

const Legend = styled.legend`
  margin-left: -5px;
  padding: 0 2px;
  line-height: 14px;
`;

const FieldGrid = styled.div`
  display: grid;
  grid-template-columns: ${({ $wide }) => ($wide ? '120px 126px 1fr 126px' : '134px 112px 1fr 112px')};
  grid-auto-rows: ${({ $wide }) => ($wide ? 30 : 27)}px;
  align-items: center;
`;

const FieldLabel = styled.label`
  padding-left: ${({ $pad }) => $pad || 0}px;
  white-space: pre;
`;

const box = css`
  width: 100%;
  height: ${({ $h }) => $h || 20}px;
  border: 1px solid #abadb3;
  text-align: center;
`;

const FieldInput = styled.input`
  ${box}
  background: #fff;
`;

const SelectWrap = styled.div`
  position: relative;
`;

const FieldSelect = styled.select`
  ${box}
  padding-right: 16px;
  appearance: none;
  text-align-last: center;
  border-color: ${({ $hover }) => ($hover ? '#7eb4ea' : '#acacac')};
  background: ${({ $hover }) => ($hover ? 'linear-gradient(#ecf4fc, #dcecfc)' : 'linear-gradient(#f0f0f0, #e3e3e3)')};
`;

const CheckLabel = styled.label`
  display: flex;
  align-items: center;
  gap: 5px;
  padding-left: 4px;
`;

const Check = styled.input`
  appearance: none;
  width: 14px;
  height: 14px;
  border: 1px solid #707070;
  background: #fff;
`;

const DialogButtons = styled.div`
  display: flex;
  justify-content: center;
  gap: 10px;
  padding-top: 5px;
`;

const DialogButton = styled.button`
  width: 93px;
  height: 20px;
  border: 1px solid ${({ $primary }) => ($primary ? '#2a6fae' : '#707070')};
  background: #ddd;
`;

const GROUPS = [
  {
    legend: '1.竖向钢筋（从左往右数）',
    rows: [
      [{ label: '（1）构造钢筋直径', type: 'select', value: '8', h: 21 }, { label: '（5）构造筋边距', value: '30' }],
      [{ label: '（2）一般纵筋直径', type: 'select', value: '10', h: 21 }, { label: '（6）纵筋首间距', value: '100' }],
      [{ label: '（3）套筒连接筋直径', type: 'select', value: '20', hover: true }, { label: '（7）纵筋间距', value: '150' }],
      [{ label: '（4）拉筋直径', type: 'select', value: '6' }],
    ],
  },
  {
    legend: '2.竖向钢筋弯折形式',
    tint: true,
    rows: [
      [{ label: '（1）一般纵筋弯折', type: 'select', value: '均90°弯锚', h: 21 }, { label: '（4）顶部锚固', type: 'select', value: '无', h: 21 }],
      [{ label: '（2）一般纵筋出筋', type: 'check', value: '顶部出筋' }, { label: '（5）连接筋布置形式', type: 'select', value: '隔一布一', h: 21 }],
      [{ label: '（3）出筋长度', value: '265', h: 17 }, { label: '（6）弯折长度', value: '100', h: 17 }],
    ],
  },
  {
    legend: '3.水平钢筋（从下往上数）',
    rows: [
      [{ label: '（1）钢筋直径', type: 'select', value: '6' }, { label: '（2）弯折长度', value: '100', h: 17 }],
      [{ label: '（3） 加密间距', value: '150', h: 17 }, { label: '非加密间距', value: '200', h: 17, pad: 16 }],
      [{ label: '（4）左端伸出长度', value: '210' }, { label: '左端弯折形式', type: 'select', value: '无弯锚', pad: 16 }],
      [{ label: '（5）右端伸出长度', value: '200' }, { label: '右端弯折形式', type: 'select', value: '无弯锚', pad: 16 }],
    ],
  },
  {
    legend: '4.其他',
    tint: true,
    wide: true,
    rows: [
      [{ label: '（1）PVC管避让间距', value: '55', h: 17 }, { label: '（3）全灌浆套筒厂家', type: 'select', value: '北京思达建茂', h: 18 }],
      [{ label: '（2）灌浆套筒形式', type: 'select', value: '全灌浆套筒' }, { label: '（4）半灌浆套筒厂家', type: 'select', value: '北京思达建茂' }],
    ],
  },
];

const Field = ({ id, field, right }) => {
  const { label, type, value, h, hover, pad } = field;
  return (
    <>
      <FieldLabel htmlFor={id} $pad={right ? pad || 6 : 0}>{label}</FieldLabel>
      {type === 'select' && (
        <SelectWrap>
          <FieldSelect id={id} defaultValue={value} $h={h} $hover={hover}>
            <option>{value}</option>
          </FieldSelect>
          <Chevron $right={7} width="5" height="4" viewBox="0 0 5 4" fill="none" stroke={hover ? '#111' : '#606060'}>
            <path d="M.5 .5 2.500 3 4.500 .5" />
          </Chevron>
        </SelectWrap>
      )}
      {type === 'check' && (
        <CheckLabel>
          <Check id={id} type="checkbox" />
          {value}
        </CheckLabel>
      )}
      {!type && <FieldInput id={id} type="text" defaultValue={value} $h={h} />}
    </>
  );
};

const RebarDialog = () => (
  <Dialog onSubmit={(e) => e.preventDefault()}>
    <DialogTitle>
      <Icon name="cadApp" />
      <h2>钢筋信息录入</h2>
      <WindowButton type="button" aria-label="最小化">
        <svg width="11" height="11" stroke="#000"><path d="M0 5.500h11" /></svg>
      </WindowButton>
      <WindowButton type="button" aria-label="最大化">
        <svg width="11" height="11" fill="none" stroke="#000"><path d="M.5 .5h10v10H.5z" /></svg>
      </WindowButton>
      <WindowButton type="button" aria-label="关闭">
        <svg width="11" height="11" stroke="#000"><path d="m0 0 11 11M11 0 0 11" /></svg>
      </WindowButton>
    </DialogTitle>
    <DialogBody>
      {GROUPS.map((group, g) => (
        <Group key={group.legend} $tint={group.tint} $wide={group.wide}>
          <Legend>{group.legend}</Legend>
          <FieldGrid $wide={group.wide}>
            {group.rows.map((row, r) =>
              row.map((field, c) => <Field key={`${r}-${c}`} id={`f-${g}-${r}-${c}`} field={field} right={c === 1} />)
            )}
          </FieldGrid>
        </Group>
      ))}
      <DialogButtons>
        <DialogButton type="button">纵筋自动计算</DialogButton>
        <DialogButton type="submit" $primary>确认</DialogButton>
        <DialogButton type="button">取消</DialogButton>
      </DialogButtons>
    </DialogBody>
  </Dialog>
);

/* ---------- bottom of the drawing ---------- */

const LayoutTabs = styled.div`
  display: flex;
  height: 15px;
  background: #f1f1f1;
`;

const LayoutNav = styled.button`
  width: 14px;
  border-right: 1px solid #999;
  display: flex;
  align-items: center;
  justify-content: center;
`;

const LayoutTab = styled.button`
  height: 15px;
  line-height: 15px;
  margin-left: ${({ $on }) => ($on ? 3 : 0)}px;
  padding: 0 9px 0 8px;
  color: ${({ $on }) => ($on ? '#fff' : '#000')};
  background: ${({ $on }) => ($on ? '#000' : 'linear-gradient(110deg, transparent calc(100% - 5px), #555 calc(100% - 5px) calc(100% - 4px), transparent calc(100% - 4px))')};
  clip-path: ${({ $on }) => ($on ? 'polygon(0 0, 100% 0, calc(100% - 4px) 100%, 5px 100%)' : 'none')};
`;

const ScaleBar = styled.div`
  display: flex;
  align-items: stretch;
  height: 27px;
  border: 1px solid #fff;
  border-bottom: 2px solid #fff;
  background: #f1f1f1;
`;

const ScaleGrip = styled.div`
  width: 7px;
  border: 1px solid #aaa;
  border-width: 0 1px;
`;

const ScaleGroup = styled.div`
  display: flex;
  align-items: center;
  gap: 2px;
  padding: 2px 0 0 3px;
  border-left: 1px solid #888;
`;

const HelpButton = styled.button`
  height: 20px;
  padding: 0 1px;
  border: 1px solid #aaa;
  background: #e3e3e3;
`;

const CommandArea = styled.section`
  display: flex;
  height: 58px;
  margin-right: 21px;
  border-bottom: 1px solid #222;
`;

const CommandGrip = styled.div`
  display: flex;
  flex-direction: column;
  align-items: center;
  gap: 5px;
  width: 23px;
  padding-top: 14px;
  background: linear-gradient(90deg, #7c7c7c, #4c4c4c);
`;

const CommandMain = styled.div`
  flex: 1;
  display: flex;
  flex-direction: column;
`;

const History = styled.div`
  height: 34px;
  padding: 3px 2px 0;
  background: #c8c8c8;
  border-bottom: 1px solid #777;
  font-family: ${MONO_FONT};
  line-height: 15px;

  p {
    margin: 0;
  }
`;

const CommandInputRow = styled.label`
  flex: 1;
  display: flex;
  align-items: center;
  padding-left: 5px;
  background: #fff;
`;

const Prompt = styled.span`
  width: 15px;
  height: 13px;
  border: 1px solid #9ba6b0;
  background: #eef1f4;
  font: 700 9px/10px ${MONO_FONT};
  color: #445;
`;

const CommandInput = styled.input`
  flex: 1;
  padding-left: 6px;
  font-size: 13px;
  font-style: italic;

  &::placeholder {
    color: #999;
    opacity: 1;
  }
`;

/* ---------- TSSD panel ---------- */

const Panel = styled.aside`
  display: flex;
  flex-direction: column;
  width: 87px;
  margin: 2px 0 2px;
  padding: 7px 4px 0 5px;
  background: #fff;
  border-right: 1px solid #888;
`;

const PanelGrip = styled.div`
  display: flex;
  align-items: center;
  gap: 5px;
  height: 5px;
`;

const GripLines = styled.div`
  width: 61px;
  height: 5px;
  border: 1px solid #999;
  border-left: 0;
`;

const PanelClose = styled.button`
  line-height: 8px;
  font-size: 13px;
  font-weight: 700;
`;

const PanelTitle = styled.div`
  margin-top: 4px;
  padding-top: 2px;
  border-bottom: 1px solid #000;
  background: #f1f1f1;
  font: 10px/14px ${MONO_FONT};
  text-align: center;
`;

const PanelBody = styled.div`
  flex: 1;
  display: flex;
`;

const PanelIcons = styled.div`
  width: 21px;
  padding-top: 1px;
  border-right: 1px solid #777;
`;

const PanelMenu = styled.ul`
  flex: 1;
  margin: 0;
  padding: 2px 0 0;
  list-style: none;
  background: #f1f1f1;
`;

const PanelItem = styled.li`
  display: flex;
  align-items: center;
  justify-content: space-between;
  height: ${({ $rule }) => ($rule ? 18 : 14)}px;
  padding: 0 0 ${({ $rule }) => ($rule ? 3 : 0)}px 1px;
  border-bottom: ${({ $rule }) => ($rule ? '1px solid #000' : '0')};
  line-height: 14px;
  white-space: pre;

  a {
    color: #000;
    text-decoration: none;
  }
`;

const PANEL_ITEMS = [
  ['初始设置', false, true], ['图形接口', true, true],
  ['布置轴网', true], ['布置柱子', true], ['梁绘制', true], ['墙体绘制', true], ['楼板设计', true], ['楼梯平面', false], ['基础承台', true, true],
  ['构件绘图', true], ['算构件  1', true], ['算构件  2', true, true],
  ['钢筋绘制', true], ['钢筋工具', true], ['尺寸标注', true], ['书写文字', true], ['文字工具', true], ['表格绘制', true],
  ['钢结构', true], ['图层显示', true], ['组与图块', true], ['实体工具', true], ['其他工具', true, true],
  ['符  号...', false], ['图库管理', false],
];

const PANEL_ICONS = [
  'swirl', 'folderImg', 'axis', 'axisNet', 'column', 'beam', 'wall', 'slab', 'stair', 'base', 'sketch', 'calcBlack', 'calcRed',
  'rebar', 'rebarPen', 'dim', 'word', 'wordPen', 'tableA', 'steel', 'stack', 'group', 'pencil2', 'toolbox', 'sketch', 'yellowOpen',
];

/* ---------- status bar and taskbar ---------- */

const StatusBar = styled.div`
  display: flex;
  height: 22px;
  border-top: 1px solid #222;
  background: linear-gradient(#a5a5a5, #7c7c7c);
`;

const StatusText = styled.div`
  width: 306px;
  padding-left: 7px;
  line-height: 24px;
  white-space: pre;
`;

const StatusCell = styled.button`
  display: flex;
  align-items: center;
  justify-content: center;
  width: ${({ $w }) => $w || 22}px;
  border-left: 1px solid #555;
  background: ${({ $on, $sunk }) => ($sunk ? '#8a8a8a' : $on ? 'linear-gradient(#e2f3f7, #9fcfdc)' : 'linear-gradient(#d2d2d2, #a8a8a8)')};
`;

const StatusGap = styled.div`
  width: ${({ $w }) => $w}px;
  border-left: 1px solid #444;
`;

const Taskbar = styled.footer`
  display: flex;
  height: 40px;
  background: #1c1c1c;
  color: #fff;
`;

const StartButton = styled.button`
  width: 48px;
  padding-left: 16px;
  color: #fff;
`;

const TaskSearch = styled.label`
  display: flex;
  align-items: center;
  gap: 11px;
  width: 343px;
  height: 39px;
  padding-left: 12px;
  background: #f2f2f2;

  input {
    flex: 1;
    font-size: 14px;
  }

  input::placeholder {
    color: #333;
    opacity: 1;
  }
`;

const TaskButton = styled.button`
  display: flex;
  align-items: center;
  justify-content: center;
  width: 49px;
  border-bottom: 2px solid ${({ $open }) => ($open ? '#bdbdbd' : 'transparent')};
  border-top: 2px solid transparent;
  background: ${({ $active }) => ($active ? '#4a4a4a' : 'transparent')};
  color: #6fce3c;
`;

const Tray = styled.div`
  display: flex;
  align-items: center;
  padding-right: 20px;
`;

const TrayButton = styled.button`
  display: flex;
  align-items: center;
  justify-content: center;
  width: 24px;
  height: 40px;
  font-size: 15px;
  color: ${({ $color }) => $color || '#fff'};
`;

const BlueBadge = styled.span`
  display: flex;
  align-items: center;
  justify-content: center;
  width: 13px;
  height: 16px;
  border-radius: 6px;
  background: #1f7fe0;
  color: #fff;
`;

const Clock = styled.div`
  width: 74px;
  margin-right: 8px;
  line-height: 19px;
  text-align: center;
`;

/* ---------- recorder ---------- */

const Recorder = styled.div`
  position: absolute;
  left: 50%;
  bottom: 108px;
  transform: translateX(-50%);
  display: flex;
  align-items: center;
  width: 492px;
  height: 55px;
  padding-left: 2px;
  border-radius: 5px;
  background: #fff;
  box-shadow: 0 1px 4px rgba(0, 0, 0, 0.6);
`;

const RoundButton = styled.button`
  display: flex;
  align-items: center;
  justify-content: center;
  width: 41px;
  height: 41px;
  margin-left: ${({ $gap }) => $gap}px;
  border: 1px solid ${({ $color }) => $color};
  border-radius: 50%;
`;

const TimeBox = styled.div`
  width: 112px;
  height: 44px;
  margin-left: 21px;
  padding: 3px 6px;
  border: 1px solid #ccc;
  border-radius: 6px;

  strong {
    display: block;
    font-size: 17px;
    line-height: 20px;
  }
`;

const PlainButton = styled.button`
  margin-left: ${({ $gap }) => $gap}px;
`;

const MinMaxClose = ({ color, w, thick = 1 }) => (
  <>
    <WindowButton $w={w} aria-label="最小化">
      <svg width="10" height="10" stroke={color} strokeWidth={thick}><path d="M0 5.500h10" /></svg>
    </WindowButton>
    <WindowButton $w={w} aria-label="还原">
      <svg width="10" height="10" fill="none" stroke={color}><path d="M.5 2.500h7v7h-7zM2.500 2V.5h7v7H8" /></svg>
    </WindowButton>
    <WindowButton $w={w} aria-label="关闭">
      <svg width="10" height="10" stroke={color} strokeWidth={thick}><path d="m1 1 8 8M9 1 1 9" /></svg>
    </WindowButton>
  </>
);

const MENUS = ['文件(F)', '编辑(E)', '视图(V)', '插入(I)', '格式(O)', '工具(T)', '绘图(D)', '标注(N)', '修改(M)', '参数(P)', '窗口(W)', '帮助(H)'];
const TS_MENUS = ['TS【图形接口', '平面', '构件', '计算1', '计算2', '工具】'];

const STANDARD_TOOLS = [
  'new', 'open', 'save', '|', 'print', 'preview', 'publish', 'globe', '|', 'cut', 'copy', 'paste', 'match', 'blockEdit', '|',
  'undo', 'down', 'redo', 'downDim', '|', 'pan', 'zoomRt', 'zoomWin', 'zoomPrev', '|',
  'props', 'design', 'palettes', 'sheets', 'markup', 'calc', '|', 'help',
];
const TS_TOOLS = ['folderImg', 'gridPen', 'tableRed', '|', 'yellowOpen', 'winA', 'winB', 'sketch', '|', 'helpRed', 'docPen', 'ie'];
const DRAW_TOOLS = [
  'line', 'xline', 'pline', 'polygon', 'rect', 'arc', 'circle', 'cloud', 'spline', 'ellipse', 'ellipseArc', 'insert', 'block',
  'point', 'hatch', 'gradient', 'region', 'table', 'mtext', 'addSel',
];
const MODIFY_TOOLS = [
  'erase', 'copyObj', 'mirror', 'offset', 'array', 'move', 'rotate', 'scale', 'stretch', 'trim', 'extend', 'breakAt', 'breakObj',
  'join', 'chamfer', 'fillet', 'blend', 'explode',
];
const ORDER_TOOLS = ['order1', 'order2', 'order3', 'order4', '|', 'annoFront', 'hatchBack'];
const STATUS_TOOLS = [
  ['infer'], ['snapDots'], ['grid'], ['ortho'], ['polar'], ['osnap', true], ['osnap3', true], ['otrack', true], ['ducs', true],
  ['dyn'], ['lwt'], ['tpy', true], ['qp'], ['sc'], ['am'],
];
const TASKS = [
  ['cortana'], ['taskview'], ['greenM'], ['wheel', true], ['vs'], ['netease'], ['tssdApp'], ['snip'], ['wordApp'], ['ding'],
  ['wechat', true], ['folder', true], ['cadApp', true, true],
];

const ToolList = ({ tools }) =>
  tools.map((name, i) =>
    name === '|' ? (
      <Sep key={i} />
    ) : (
      <ToolButton key={i} $w={name.startsWith('down') ? 13 : 23} aria-label={name}>
        <Icon name={name} />
      </ToolButton>
    )
  );

const App = () => (
  <>
    <GlobalStyle />
    <Shell>
      <Header>
        <AppButton aria-label="应用程序菜单">
          <Icon name="cadA" size={25} />
          <svg width="7" height="5"><path d="M0 0h7L3.500 5z" fill="#333" /></svg>
        </AppButton>
        <HeaderRows>
          <TitleRow>
            <QuickButton aria-label="快速访问">
              <svg width="8" height="8"><path d="M0 0h8v2H0zM0 3h8L4 7z" fill="#111" /></svg>
            </QuickButton>
            <Title>{'Tssd2015 For Autodesk AutoCAD 2014    Drawing1.dwg'}</Title>
            <InfoCenter>
              <InfoButton $w={13} aria-label="展开">
                <svg width="5" height="8"><path d="M0 0v8l5-4z" fill="#111" /></svg>
              </InfoButton>
              <InfoSearch aria-label="搜索" placeholder="键入关键字或短语" />
              <InfoButton aria-label="搜索"><Icon name="binoc" /></InfoButton>
              <InfoButton $w={54}><Icon name="person" />登录</InfoButton>
              <Spacer />
              <InfoButton $w={14} aria-label="更多"><Icon name="down" size={12} /></InfoButton>
              <InfoButton $w={22} aria-label="Exchange"><Icon name="exch" /></InfoButton>
              <InfoButton $w={24} aria-label="360"><Icon name="a360" /></InfoButton>
              <InfoButton $w={14} aria-label="更多"><Icon name="down" size={12} /></InfoButton>
              <Sep />
              <InfoButton $w={28} aria-label="帮助"><Icon name="helpBall" size={17} /></InfoButton>
              <InfoButton $w={14} aria-label="更多"><Icon name="down" size={12} /></InfoButton>
            </InfoCenter>
            <WindowButtons>
              <MinMaxClose color="#888" />
            </WindowButtons>
          </TitleRow>
          <MenuRow>
            <MenuGroup $gap={25}>
              {MENUS.map((m) => <MenuItem key={m} href="#">{m}</MenuItem>)}
              <MenuGroup $gap={14}>
                {TS_MENUS.map((m) => <MenuItem key={m} href="#">{m}</MenuItem>)}
              </MenuGroup>
            </MenuGroup>
            <MenuGroup $gap={0}>
              <MinMaxClose color="#1a1a1a" w={17} thick={2} />
            </MenuGroup>
          </MenuRow>
        </HeaderRows>
      </Header>

      <FileTabs>
        <FileTab>
          Drawing1*
          <TabClose aria-label="关闭">×</TabClose>
        </FileTab>
        <NewTab aria-label="新建">+</NewTab>
      </FileTabs>

      <Toolbars>
        <ToolRow>
          <Segment>
            <Grip />
            <ToolList tools={STANDARD_TOOLS} />
          </Segment>
          <Segment>
            <Grip />
            <ToolButton $w={24} aria-label="文字样式"><Icon name="textStyle" /></ToolButton>
            <Combo label="文字样式" value="STANDARD" w={118} pad={17} />
            <DoubleSep />
            <ToolButton $w={24} aria-label="标注样式"><Icon name="dimStyle" /></ToolButton>
            <Combo label="标注样式" value="STANDARD" w={118} pad={17} />
            <DoubleSep />
            <ToolButton $w={24} aria-label="表格样式"><Icon name="tableStyle" /></ToolButton>
            <Combo label="表格样式" value="Standard" w={120} pad={4} />
            <DoubleSep />
            <ToolButton $w={24} aria-label="多重引线样式"><Icon name="leaderStyle" /></ToolButton>
            <Combo label="多重引线样式" value="Standard" w={118} pad={17} />
          </Segment>
          <Segment>
            <Grip />
            <GlyphButton>层</GlyphButton>
            <GlyphButton>编</GlyphButton>
            <ToolButton aria-label="刷"><Icon name="brushA" /></ToolButton>
            <GlyphButton>平</GlyphButton>
            <ToolButton aria-label="移"><Icon name="target" /></ToolButton>
            <GlyphButton>引</GlyphButton>
            <GlyphButton>断</GlyphButton>
            <GlyphButton>齐</GlyphButton>
          </Segment>
        </ToolRow>
        <ToolRow>
          <Segment>
            <Grip />
            <ToolButton $w={24} aria-label="图层特性"><Icon name="layers" /></ToolButton>
            <Combo label="图层" value="0" w={299} pad={5}>
              <Icon name="bulb" />
              <Icon name="sun" />
              <Icon name="freeze" size={17} />
              <Icon name="lock" />
              <Icon name="swatch" />
            </Combo>
            <ToolList tools={['layerCur', 'layerPrev', 'layerState']} />
          </Segment>
          <Segment>
            <Grip />
            <Combo label="颜色" value="ByLayer" w={149} pad={1} serif>
              <Icon name="swatch" size={18} />
            </Combo>
            <DoubleSep />
            <Combo label="线型" value="ByLayer" w={160} pad={5} serif>
              <LineSample $w={58} />
            </Combo>
            <DoubleSep />
            <Combo label="线宽" value="ByLayer" w={125} pad={4} serif>
              <LineSample $w={34} />
            </Combo>
            <DoubleSep />
            <Combo label="打印样式" value="ByColor" w={120} pad={9} serif disabled bg="#d3d3d3" />
          </Segment>
          <Segment>
            <Grip />
            <ToolList tools={TS_TOOLS} />
          </Segment>
        </ToolRow>
      </Toolbars>

      <Body>
        <MainColumn>
          <WorkRow>
            <Rail $w={29}>
              <RailBar>
                <RailGrip />
                {DRAW_TOOLS.map((name) => (
                  <ToolButton key={name} aria-label={name}><Icon name={name} /></ToolButton>
                ))}
              </RailBar>
            </Rail>
            <CanvasColumn>
              <Canvas>
                <Drawing fill="none" stroke="#e8e8e8">
                  <rect x="204.500" y="150.500" width="1359" height="480" />
                </Drawing>
                <ViewLabel>[-][俯视][二维线框]</ViewLabel>
                <Ucs width="74" height="78" viewBox="0 0 74 78" fill="none" stroke="#fff">
                  <path d="M7.500 14v49M7.500 63.500H57M3.500 58.500h9v9h-9z" transform="translate(0 6)" />
                  <path d="m9 2 6 6 6-6M15 8v7M62 56l12 13M74 56 62 69" />
                </Ucs>
                <BackWindow>
                  <BackIcon />
                  <BackGroup $grow={7} />
                  <BackGroup $grow={6} />
                </BackWindow>
                <RebarDialog />
                <Cursor width="13" height="20" viewBox="0 0 13 20" fill="#fff" stroke="#000">
                  <path d="M.5 .5v15l3.500-3 2.500 6 2.500-1-2.500-6h5z" />
                </Cursor>
              </Canvas>
              <LayoutTabs>
                {['M4 1v8M9 1v8L5 5z', 'M8 1v8L4 5z', 'M4 1v8l4-4z', 'M8 1v8M3 1v8l4-4z'].map((d) => (
                  <LayoutNav key={d} aria-label="布局">
                    <svg width="11" height="10" fill="#666" stroke="#666"><path d={d} /></svg>
                  </LayoutNav>
                ))}
                <LayoutTab $on>模型</LayoutTab>
                <LayoutTab>布局1</LayoutTab>
              </LayoutTabs>
              <ScaleBar>
                <ScaleGrip />
                <Spacer />
                <ScaleGroup>
                  绘图1:
                  <Combo label="绘图比例" value="100" w={53} pad={2} bg="#fff" edge="#777" />
                  出图1:
                  <Combo label="出图比例" value="100" w={53} pad={2} bg="#fff" edge="#777" />
                  绘图状态
                  <Combo label="绘图状态" value="通用" w={98} pad={2} edge="#aaa" />
                  <HelpButton>帮助</HelpButton>
                </ScaleGroup>
              </ScaleBar>
            </CanvasColumn>
            <Rail $w={33} $pad={5}>
              <RailBar>
                <RailGrip />
                {MODIFY_TOOLS.map((name) => (
                  <ToolButton key={name} aria-label={name}><Icon name={name} /></ToolButton>
                ))}
              </RailBar>
              <RailBar>
                <RailGrip />
                {ORDER_TOOLS.map((name) =>
                  name === '|' ? <RailSep key={name} /> : (
                    <ToolButton key={name} aria-label={name}><Icon name={name} /></ToolButton>
                  )
                )}
              </RailBar>
            </Rail>
          </WorkRow>
          <CommandArea>
            <CommandGrip>
              <Icon name="closeX" />
              <Icon name="wrench" />
            </CommandGrip>
            <CommandMain>
              <History>
                <p>请指定图框左上角点: (44583.8804082472,13251.0409108392)</p>
                <p>A3 (29733.8804082472,13251.0409108392)</p>
              </History>
              <CommandInputRow>
                <Prompt>&gt;_</Prompt>
                <Icon name="downDim" size={12} />
                <CommandInput placeholder="键入命令" aria-label="命令" />
              </CommandInputRow>
            </CommandMain>
          </CommandArea>
        </MainColumn>
        <Panel>
          <PanelGrip>
            <GripLines />
            <PanelClose aria-label="关闭">×</PanelClose>
          </PanelGrip>
          <PanelTitle>TSSD2015<br />[1: 100]</PanelTitle>
          <PanelBody>
            <PanelIcons>
              {PANEL_ICONS.map((name, i) => (
                <ToolButton key={i} $w={18} $h={17} aria-label={name}><Icon name={name} /></ToolButton>
              ))}
            </PanelIcons>
            <PanelMenu>
              {PANEL_ITEMS.map(([text, sub, rule]) => (
                <PanelItem key={text} $rule={rule}>
                  <a href="#">{text}</a>
                  {sub && <svg width="5" height="8"><path d="M0 0v8l4-4z" fill="#000" /></svg>}
                </PanelItem>
              ))}
            </PanelMenu>
          </PanelBody>
        </Panel>
      </Body>

      <StatusBar>
        <StatusText>{'当前比例  1:  100     44583.880, 13251.041, 0.000'}</StatusText>
        {STATUS_TOOLS.map(([name, on]) => (
          <StatusCell key={name} $on={on} aria-label={name}><Icon name={name} /></StatusCell>
        ))}
        <StatusGap $w={1} />
        <Spacer />
        <StatusCell $w={29}>模型</StatusCell>
        <StatusCell aria-label="图纸"><Icon name="paper" /></StatusCell>
        <StatusCell aria-label="视图"><Icon name="views" /></StatusCell>
        <StatusGap $w={18} />
        <StatusCell $w={55}>
          <Icon name="anno" />
          1:1
          <Icon name="down" />
        </StatusCell>
        <StatusCell aria-label="注释可见性"><Icon name="annoSun" /></StatusCell>
        <StatusCell aria-label="自动缩放"><Icon name="annoDim" /></StatusCell>
        <StatusGap $w={6} />
        <StatusCell $w={24} aria-label="工作空间"><Icon name="gear" /></StatusCell>
        <StatusCell $w={21} aria-label="锁定"><Icon name="unlock" /></StatusCell>
        <StatusCell $w={21} aria-label="硬件加速"><Icon name="orange" /></StatusCell>
        <StatusCell $w={28} $sunk aria-label="隔离对象"><Icon name="bulb" /></StatusCell>
        <StatusCell $w={18} aria-label="菜单"><Icon name="down" /></StatusCell>
        <StatusCell $w={24} aria-label="全屏"><Icon name="winFrame" size={14} /></StatusCell>
      </StatusBar>

      <Taskbar>
        <StartButton aria-label="开始"><FaWindows size={17} /></StartButton>
        <TaskSearch>
          <Icon name="search" size={17} />
          <input placeholder="在这里输入你要搜索的内容" aria-label="搜索" />
        </TaskSearch>
        {TASKS.map(([name, open, active]) => (
          <TaskButton key={name} $open={open} $active={active} aria-label={name}>
            {name === 'wechat' ? <FaWeixin size={25} /> : <Icon name={name} size={name === 'taskview' ? 17 : 24} />}
          </TaskButton>
        ))}
        <Spacer />
        <Tray>
          <TrayButton aria-label="提示"><Icon name="tip" size={22} /></TrayButton>
          <TrayButton aria-label="展开"><Icon name="up" /></TrayButton>
          <TrayButton aria-label="麦克风"><Icon name="mic" /></TrayButton>
          <TrayButton $color="#3fd07a" aria-label="微信"><FaWeixin size={17} /></TrayButton>
          <TrayButton aria-label="输入法"><Icon name="face" /></TrayButton>
          <TrayButton aria-label="钉钉"><Icon name="ding" /></TrayButton>
          <TrayButton aria-label="蓝牙"><BlueBadge><FaBluetoothB size={11} /></BlueBadge></TrayButton>
          <TrayButton aria-label="音量"><Icon name="speaker" /></TrayButton>
          <TrayButton aria-label="网络"><Icon name="wifi" /></TrayButton>
          <TrayButton aria-label="安全"><Icon name="shield" /></TrayButton>
          <TrayButton aria-label="电池"><Icon name="battery" /></TrayButton>
          <TrayButton>英</TrayButton>
          <Clock>15:32<br />2020/6/16</Clock>
          <TrayButton aria-label="通知"><Icon name="notify" /></TrayButton>
        </Tray>
      </Taskbar>

      <Recorder>
        <svg width="8" height="9" stroke="#999"><path d="M0 .5h8M0 4.500h8M0 8.500h8" /></svg>
        <RoundButton $gap={14} $color="#e8544c" aria-label="停止">
          <svg width="15" height="15"><rect width="15" height="15" rx="1" fill="#f0483e" /></svg>
        </RoundButton>
        <RoundButton $gap={21} $color="#2b97d8" aria-label="暂停">
          <svg width="13" height="20" stroke="#2b97d8" strokeWidth="3" strokeLinecap="round"><path d="M2 2v16M11 2v16" /></svg>
        </RoundButton>
        <TimeBox>
          录制中...
          <strong>00:04:18</strong>
        </TimeBox>
        <PlainButton $gap={20} aria-label="音量">
          <svg width="104" height="26" fill="none">
            <path d="M0 24.500h19" stroke="#e0626a" strokeDasharray="2 2" />
            <path d="M38 20 102 7v13z" fill="#fbe3e6" />
            <path d="M38 20.500h65" stroke="#e8606c" strokeWidth="3" />
            <path d="M103 15v10" stroke="#e8606c" strokeWidth="2" />
          </svg>
        </PlainButton>
        <PlainButton $gap={20} aria-label="摄像头">
          <svg width="26" height="28" fill="none" stroke="#111" strokeWidth="1.500">
            <circle cx="11" cy="11" r="10" />
            <circle cx="11" cy="11" r="5.500" fill="#000" />
            <circle cx="8.500" cy="9" r="2" fill="#fff" stroke="none" />
            <path d="M3 26q8-7 16 0M18.500 22.500h7M22 19v7" />
          </svg>
        </PlainButton>
        <PlainButton $gap={14} aria-label="画笔">
          <svg width="26" height="26" fill="none" stroke="#111" strokeWidth="1.500">
            <path d="M1 24 3 16 18 2l5 5L8 21z" />
            <path d="m16 4 5 5 3.500-3.500-5-5z" fill="#000" />
            <path d="m1 24 1-4 3 3z" fill="#000" />
          </svg>
        </PlainButton>
      </Recorder>
    </Shell>
  </>
);

export default App;
